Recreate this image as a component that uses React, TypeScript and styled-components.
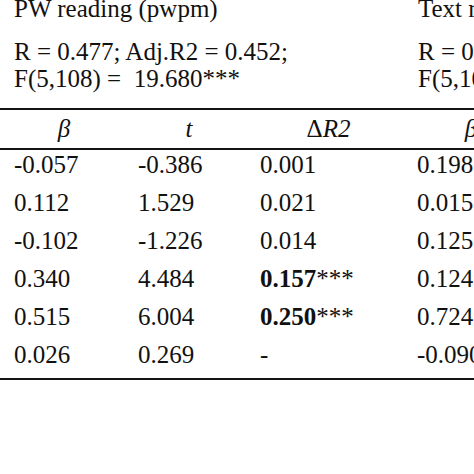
import React from 'react';
import styled, { createGlobalStyle } from 'styled-components';

const GlobalStyle = createGlobalStyle`
  html, body {
    margin: 0;
    padding: 0;
    background: #fff;
    overflow: hidden;
  }

  body {
    font-family: "Liberation Serif", "Times New Roman", serif;
    color: #111;
  }
`;

// widths of the three columns of one model block
const COLS = [128, 122, 157];

const Page = styled.div`
  width: 900px;
  font-size: 25px;
`;

const Models = styled.div`
  display: grid;
  grid-template-columns: ${COLS.reduce((a, b) => a + b, 0)}px 1fr;
`;

const Model = styled.div<{ $pad: number }>`
  padding-left: ${(p) => p.$pad}px;
  white-space: pre;
`;

const Title = styled.div`
  line-height: 17px;
`;

const Stats = styled.div`
  margin-top: 21px;
  line-height: 27px;
`;

const Table = styled.div`
  margin-top: 16px;
  border-top: 2px solid #141414;
  border-bottom: 2px solid #141414;
`;

const Row = styled.div<{ $head?: boolean }>`
  display: grid;
  grid-template-columns: ${[...COLS, ...COLS].map((c) => `${c}px`).join(' ')};
  height: 38px;
  line-height: ${(p) => (p.$head ? '38px' : '30px')};
  border-bottom: ${(p) => (p.$head ? '2px solid #141414' : 'none')};
`;

const Cell = styled.div<{ $first?: boolean }>`
  padding-left: ${(p) => (p.$first ? 14 : 10)}px;
  white-space: nowrap;
`;

const HeadCell = styled.div`
  text-align: center;
`;

const Em = styled.i`
  font-style: italic;
`;

const Strong = styled.b`
  font-weight: 700;
`;

interface Value {
  v: string;
  bold?: boolean;
  stars?: string;
}

const rows: Value[][] = [
  [{ v: '-0.057' }, { v: '-0.386' }, { v: '0.001' }, { v: '0.198' }, { v: '1.874' }, { v: '0.032' }],
  [{ v: '0.112' }, { v: '1.529' }, { v: '0.021' }, { v: '0.015' }, { v: '0.169' }, { v: '0.003' }],
  [{ v: '-0.102' }, { v: '-1.226' }, { v: '0.014' }, { v: '0.125' }, { v: '1.307' }, { v: '0.011' }],
  [{ v: '0.340' }, { v: '4.484' }, { v: '0.157', bold: true, stars: '***' }, { v: '0.124' }, { v: '1.442' }, { v: '0.037' }],
  [{ v: '0.515' }, { v: '6.004' }, { v: '0.250', bold: true, stars: '***' }, { v: '0.724' }, { v: '7.880' }, { v: '0.342' }],
  [{ v: '0.026' }, { v: '0.269' }, { v: '-' }, { v: '-0.090' }, { v: '-0.879' }, { v: '-' }]
];

function Header () {
  const block = (k: number) => [
    <HeadCell key={`b${k}`}><Em>β</Em></HeadCell>,
    <HeadCell key={`t${k}`}><Em>t</Em></HeadCell>,
    <HeadCell key={`r${k}`}>Δ<Em>R2</Em></HeadCell>
  ];

  return (
    <Row $head>
      {block(0)}
      {block(1)}
    </Row>
  );
}

export default function App (): React.ReactElement {
  return (
    <Page>
      <GlobalStyle />
      <Models>
        <Model $pad={14}>
          <Title>PW reading (pwpm)</Title>
          <Stats>
            R = 0.477; Adj.R2 = 0.452;{'\n'}F(5,108) =  19.680***
          </Stats>
        </Model>
        <Model $pad={11}>
          <Title>Text reading (twpm)</Title>
          <Stats>
            R = 0.683; Adj.R2 = 0.669;{'\n'}F(5,108) =  46.311***
          </Stats>
        </Model>
      </Models>
      <Table>
        <Header />
        {rows.map((row, i) => (
          <Row key={i}>
            {row.map((c, j) => (
              <Cell key={j} $first={j === 0}>
                {c.bold ? <Strong>{c.v}</Strong> : c.v}
                {c.stars}
              </Cell>
            ))}
          </Row>
        ))}
      </Table>
    </Page>
  );
}
